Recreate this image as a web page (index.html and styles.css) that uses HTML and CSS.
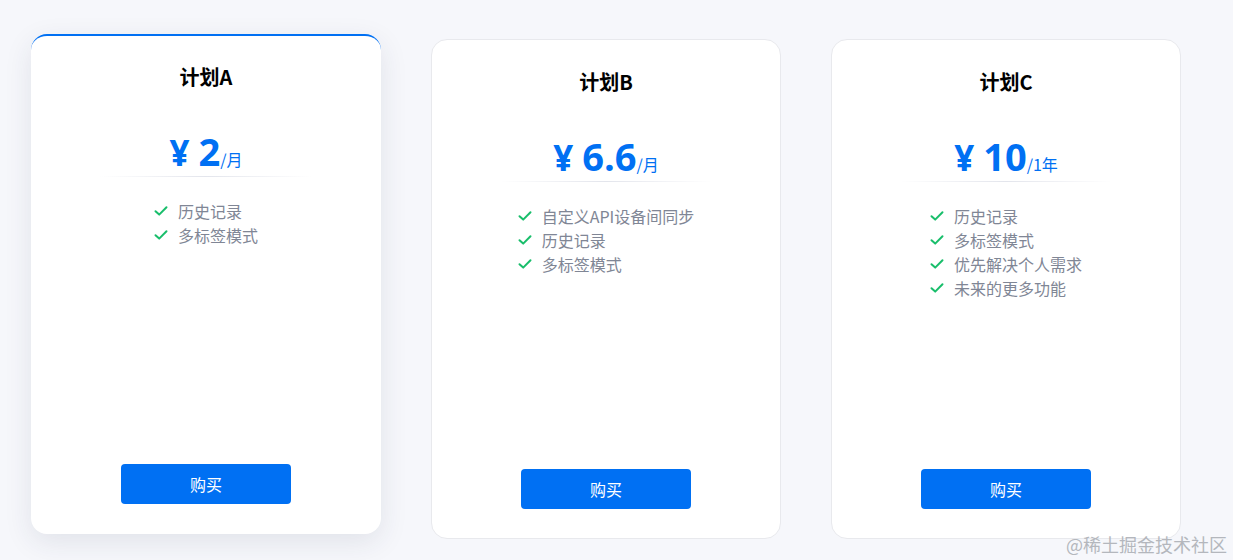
FILE: index.html
```html
<!DOCTYPE html>
<html lang="zh">
<head>
<meta charset="utf-8">
<title>Plans</title>
<link rel="stylesheet" href="styles.css">
</head>
<body>
<div class="plans">
  <div class="card card-active">
    <div class="title">计划A</div>
    <div class="price"><span class="yen">¥</span><span class="amount">2</span><span class="unit">/月</span></div>
    <div class="divider"></div>
    <ul class="features">
      <li><svg class="check" viewBox="0 0 14 14"><path d="M1.5 7.2 L5.2 10.6 L12.5 3.2"/></svg>历史记录</li>
      <li><svg class="check" viewBox="0 0 14 14"><path d="M1.5 7.2 L5.2 10.6 L12.5 3.2"/></svg>多标签模式</li>
    </ul>
    <button class="buy">购买</button>
  </div>
  <div class="card">
    <div class="title">计划B</div>
    <div class="price"><span class="yen">¥</span><span class="amount">6.6</span><span class="unit">/月</span></div>
    <div class="divider"></div>
    <ul class="features">
      <li><svg class="check" viewBox="0 0 14 14"><path d="M1.5 7.2 L5.2 10.6 L12.5 3.2"/></svg>自定义API设备间同步</li>
      <li><svg class="check" viewBox="0 0 14 14"><path d="M1.5 7.2 L5.2 10.6 L12.5 3.2"/></svg>历史记录</li>
      <li><svg class="check" viewBox="0 0 14 14"><path d="M1.5 7.2 L5.2 10.6 L12.5 3.2"/></svg>多标签模式</li>
    </ul>
    <button class="buy">购买</button>
  </div>
  <div class="card">
    <div class="title">计划C</div>
    <div class="price"><span class="yen">¥</span><span class="amount">10</span><span class="unit">/1年</span></div>
    <div class="divider"></div>
    <ul class="features">
      <li><svg class="check" viewBox="0 0 14 14"><path d="M1.5 7.2 L5.2 10.6 L12.5 3.2"/></svg>历史记录</li>
      <li><svg class="check" viewBox="0 0 14 14"><path d="M1.5 7.2 L5.2 10.6 L12.5 3.2"/></svg>多标签模式</li>
      <li><svg class="check" viewBox="0 0 14 14"><path d="M1.5 7.2 L5.2 10.6 L12.5 3.2"/></svg>优先解决个人需求</li>
      <li><svg class="check" viewBox="0 0 14 14"><path d="M1.5 7.2 L5.2 10.6 L12.5 3.2"/></svg>未来的更多功能</li>
    </ul>
    <button class="buy">购买</button>
  </div>
</div>
<div class="watermark">@稀土掘金技术社区</div>
</body>
</html>
```
FILE: styles.css
```css
* { box-sizing: border-box; }
html, body { margin: 0; padding: 0; }
body {
  background: #f6f7fb;
  font-family: "Open Sans", "Noto Sans CJK SC", sans-serif;
  width: 1233px;
  height: 560px;
  overflow: hidden;
  position: relative;
}
.plans {
  display: flex;
  align-items: flex-start;
  gap: 50px;
  padding: 39px 0 0 31px;
}
.card {
  width: 350px;
  height: 500px;
  background: #fff;
  border: 1px solid #e8e9ed;
  border-radius: 16px;
  display: flex;
  flex-direction: column;
  align-items: center;
  padding: 28px 0 29px;
}
.card-active {
  border: none;
  border-top: 2px solid #0070f3;
  transform: translateY(-5px);
  box-shadow: 0 8px 28px rgba(40, 50, 80, 0.10);
  padding-top: 27px;
  padding-bottom: 30px;
}
.title {
  font-family: "Noto Sans CJK SC", sans-serif;
  font-weight: 700;
  font-size: 20px;
  line-height: 28px;
  color: #000;
}
.price {
  margin-top: 36px;
  height: 48px;
  display: flex;
  align-items: baseline;
  color: #0070f3;
}
.yen, .amount {
  font-family: "Open Sans", sans-serif;
  font-weight: 700;
  font-size: 38px;
  line-height: 48px;
}
.yen { font-size: 35px; margin-right: 9px; }
.unit {
  font-family: "Noto Sans CJK SC", sans-serif;
  font-size: 16px;
}
.divider {
  margin-top: 1px;
  width: 212px;
  height: 1px;
  background: linear-gradient(to right, rgba(225,227,235,0), #e3e5ec 50%, rgba(225,227,235,0));
}
.features {
  list-style: none;
  margin: 22px 0 0;
  padding: 0;
  flex: 1;
}
.features li {
  display: flex;
  align-items: center;
  font-family: "Noto Sans CJK SC", sans-serif;
  font-size: 16px;
  line-height: 24px;
  color: #808695;
}
.check {
  width: 14px;
  height: 14px;
  margin-right: 10px;
  fill: none;
  stroke: #19be6b;
  stroke-width: 2;
  stroke-linecap: round;
  stroke-linejoin: round;
}
.buy {
  width: 170px;
  height: 40px;
  border: none;
  border-radius: 4px;
  background: #0070f3;
  color: #fff;
  font-family: "Noto Sans CJK SC", sans-serif;
  font-size: 16px;
  cursor: pointer;
}
.watermark {
  position: absolute;
  right: 6px;
  bottom: 3px;
  font-family: "Noto Sans CJK SC", sans-serif;
  font-size: 18px;
  color: #b4b7bd;
}
```
